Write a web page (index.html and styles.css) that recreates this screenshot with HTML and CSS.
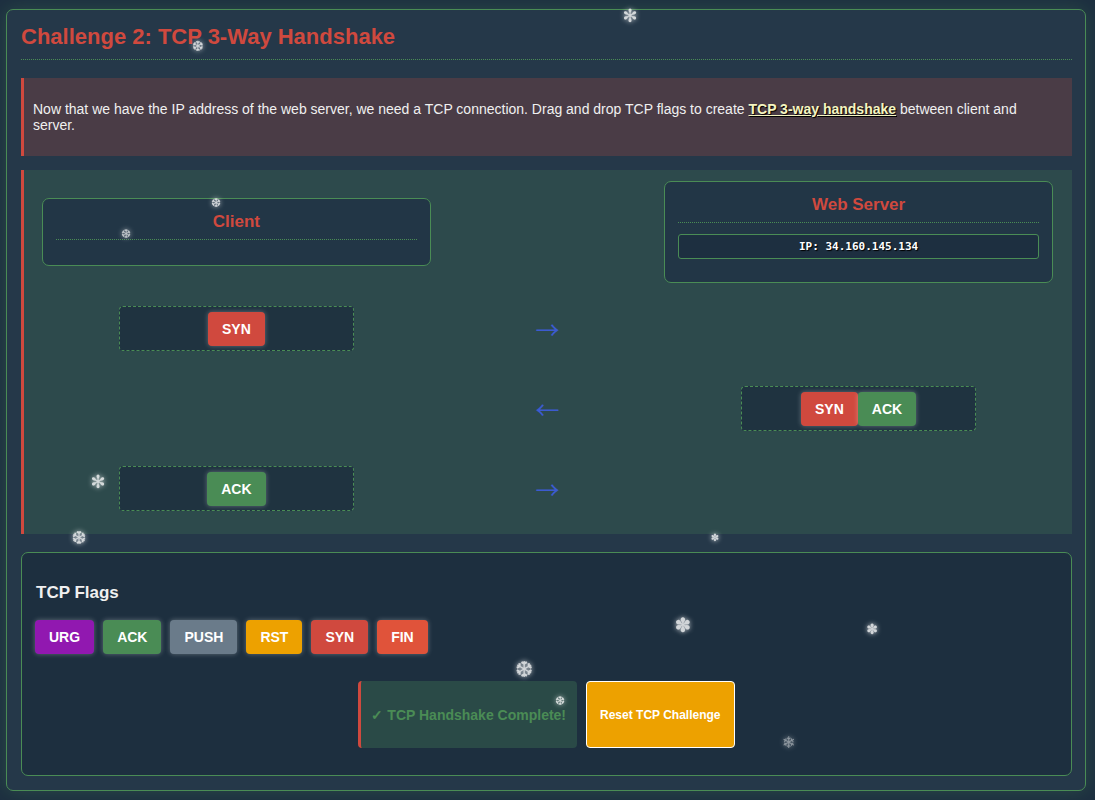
FILE: index.html
```html
<!DOCTYPE html>
<html lang="en">
<head>
  <meta charset="UTF-8">
  <meta name="viewport" content="width=device-width, initial-scale=1.0">
  <title>Challenge 2: TCP 3-Way Handshake</title>
  <link rel="stylesheet" href="styles.css">
</head>
<body>

<!-- Falling snow -->
<div class="snow" aria-hidden="true">
  <span class="flake flake-1">✻</span>
  <span class="flake flake-2">❆</span>
  <span class="flake flake-3">❆</span>
  <span class="flake flake-4">❆</span>
  <span class="flake flake-5">✻</span>
  <span class="flake flake-6">❆</span>
  <span class="flake flake-7">✽</span>
  <span class="flake flake-8">✽</span>
  <span class="flake flake-9">✽</span>
  <span class="flake flake-10">❆</span>
  <span class="flake flake-11">❆</span>
  <span class="flake flake-12">❄</span>
</div>

<main class="challenge">
  <h2>Challenge 2: TCP 3-Way Handshake</h2>

  <div class="story">
    <p>Now that we have the IP address of the web server, we need a TCP connection. Drag and drop TCP flags to create <a href="#handshake">TCP 3-way handshake</a> between client and server.</p>
  </div>

  <!-- Handshake board -->
  <div class="handshake" id="handshake">
    <div class="host">
      <h3>Client</h3>
    </div>
    <div class="host host-server">
      <h3>Web Server</h3>
      <div class="ip">IP: 34.160.145.134</div>
    </div>

    <div class="slot slot-client"><button type="button" class="flag syn">SYN</button></div>
    <div class="arrow">→</div>

    <div class="arrow">←</div>
    <div class="slot slot-server"><button type="button" class="flag syn">SYN</button><button type="button" class="flag ack">ACK</button></div>

    <div class="slot slot-client"><button type="button" class="flag ack">ACK</button></div>
    <div class="arrow">→</div>
  </div>

  <!-- Flag palette -->
  <div class="palette">
    <h3>TCP Flags</h3>
    <div class="flags">
      <button type="button" class="flag urg">URG</button>
      <button type="button" class="flag ack">ACK</button>
      <button type="button" class="flag push">PUSH</button>
      <button type="button" class="flag rst">RST</button>
      <button type="button" class="flag syn">SYN</button>
      <button type="button" class="flag fin">FIN</button>
    </div>
    <div class="result">
      <div class="status">✓ TCP Handshake Complete!</div>
      <button type="button" class="reset">Reset TCP Challenge</button>
    </div>
  </div>
</main>

</body>
</html>
```
FILE: styles.css
```css
* {
  box-sizing: border-box;
}
body {
  font-family: Arial, "Liberation Sans", sans-serif;
  font-size: 14px;
  background-color: #1d2f40;
  color: #f0f0f0;
  margin: 0;
  padding: 9px 9px 9px 6px;
}
h2, h3, p {
  margin: 0;
}
.challenge {
  background-color: #253849;
  border: 1px solid #4a8c55;
  border-radius: 7px;
  padding: 14px 13px 14px 14px;
  box-shadow: 0 0 18px rgba(74, 140, 85, 0.3);
}
.challenge h2 {
  color: #d0493e;
  font-size: 22px;
  line-height: 25px;
  padding-bottom: 10px;
  margin-bottom: 18px;
  border-bottom: 1px dotted #4a8c55;
}
.story {
  background-color: #4a3c46;
  border-left: 3px solid #d0493e;
  padding: 23px 18px 23px 9px;
  margin-bottom: 14px;
  line-height: 16px;
}
.story a {
  color: #f5f5c0;
  font-weight: bold;
  text-shadow: 1px 1px 1px #000;
}

/* Handshake board */
.handshake {
  display: grid;
  grid-template-columns: 5fr 3fr 5fr;
  row-gap: 35px;
  align-items: center;
  justify-items: center;
  background-color: #2d4a4c;
  border-left: 3px solid #d0493e;
  padding: 11px 19px 23px 18px;
  margin-bottom: 18px;
}
.host {
  grid-column: 1;
  width: 100%;
  background-color: #223646;
  border: 1px solid #4a8c55;
  border-radius: 7px;
  padding: 13px 13px 14px;
  margin-bottom: -12px;
  text-align: center;
}
.host-server {
  grid-column: 3;
  padding-bottom: 23px;
}
.host h3 {
  color: #d0493e;
  font-size: 17px;
  line-height: 19px;
  padding-bottom: 8px;
  margin-bottom: 11px;
  border-bottom: 1px dotted #4a8c55;
}
.ip {
  font-family: "DejaVu Sans Mono", monospace;
  font-size: 11px;
  font-weight: bold;
  line-height: 13px;
  color: #fff;
  background-color: #1d2f40;
  border: 1px solid #4a8c55;
  border-radius: 3px;
  padding: 5px;
  text-shadow: 1px 1px 1px #000;
}
.slot {
  display: flex;
  justify-content: center;
  align-items: center;
  box-sizing: content-box;
  width: 60%;
  height: 43px;
  background-color: #1f3340;
  border: 1px dashed #4a8c55;
  border-radius: 4px;
}
.slot-client {
  grid-column: 1;
}
.slot-server {
  grid-column: 3;
}
.arrow {
  grid-column: 2;
  color: #3c5bd0;
  font-family: "Noto Sans CJK JP", sans-serif;
  font-size: 24px;
  line-height: 25px;
}

/* TCP flags */
.flag {
  height: 34px;
  padding: 0 14px;
  border: none;
  border-radius: 4px;
  color: #fff;
  font-family: inherit;
  font-size: 14px;
  font-weight: bold;
  cursor: grab;
  box-shadow: 0 0 5px rgba(255, 255, 255, 0.3);
}
.urg {
  background-color: #9118b0;
}
.ack {
  background-color: #4a8c55;
}
.push {
  background-color: #6a7b8a;
}
.rst {
  background-color: #eda100;
}
.syn {
  background-color: #d0493e;
}
.fin {
  background-color: #e0533a;
}
.palette {
  background-color: #1d2f3f;
  border: 1px solid #4a8c55;
  border-radius: 7px;
  padding: 30px 13px 27px;
}
.palette h3 {
  font-size: 17px;
  line-height: 19px;
  margin: 0 0 18px 1px;
}
.flags {
  display: flex;
  flex-wrap: wrap;
  gap: 9px;
}
.result {
  display: flex;
  justify-content: center;
  gap: 9px;
  margin-top: 27px;
}
.status {
  display: flex;
  align-items: center;
  min-height: 67px;
  padding: 0 11px 0 10px;
  color: #4a8c55;
  font-weight: bold;
  background-color: #2a4a47;
  border-left: 3px solid #d0493e;
  border-radius: 4px;
}
.reset {
  padding: 0 13px;
  background-color: #eda100;
  border: 1px solid #fff;
  border-radius: 4px;
  color: #fff;
  font-family: inherit;
  font-size: 12px;
  font-weight: bold;
  cursor: pointer;
}

.snow {
  position: absolute;
  inset: 0;
  overflow: hidden;
  pointer-events: none;
  z-index: 10;
}
.flake {
  position: absolute;
  color: #fff;
  font-family: "DejaVu Sans", sans-serif;
  font-size: 14px;
  line-height: 1;
  opacity: 0.8;
  text-shadow: 0 0 5px #fff;
  transform: translate(-50%, -50%);
}
.flake-1 { left: 630px; top: 16px; font-size: 18px; }
.flake-2 { left: 198px; top: 46px; }
.flake-3 { left: 216px; top: 203px; font-size: 12px; }
.flake-4 { left: 126px; top: 234px; font-size: 12px; opacity: 0.7; }
.flake-5 { left: 98px; top: 482px; font-size: 18px; }
.flake-6 { left: 79px; top: 538px; font-size: 18px; }
.flake-7 { left: 715px; top: 538px; font-size: 10px; }
.flake-8 { left: 683px; top: 625px; font-size: 20px; }
.flake-9 { left: 872px; top: 629px; }
.flake-10 { left: 524px; top: 670px; font-size: 22px; }
.flake-11 { left: 560px; top: 701px; font-size: 12px; }
.flake-12 { left: 789px; top: 743px; font-size: 16px; opacity: 0.5; }
```
